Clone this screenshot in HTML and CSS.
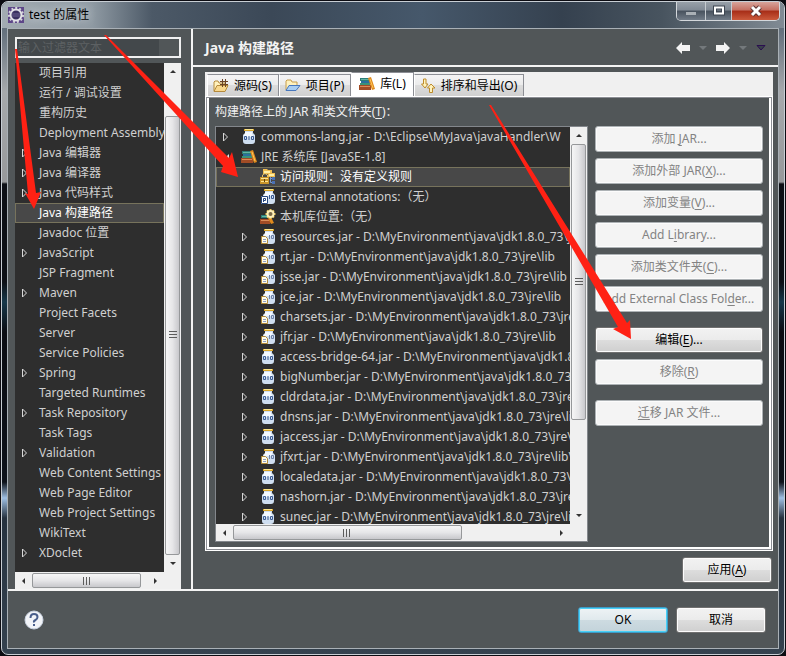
FILE: index.html
```
<!DOCTYPE html>
<html lang="zh-CN">

<head>
  <meta charset="UTF-8">
  <meta name="viewport" content="width=device-width, initial-scale=1.0">
  <title>test 的属性</title>
  <link rel="stylesheet" href="styles.css">
</head>

<body>
  <!-- shared icons -->
  <svg class="sprite" aria-hidden="true">
    <symbol id="closed" viewBox="0 0 8 12">
      <path d="M1.500 2v8l4-4z" fill="none" stroke="#d8d8d8"/>
    </symbol>
    <symbol id="open" viewBox="0 0 8 12">
      <path d="M7 3v6H1z" fill="#e8e8e8"/>
    </symbol>
    <symbol id="jar" viewBox="0 0 16 16">
      <path d="M4 2h8v2l2 2v6q0 3-3 3H5q-3 0-3-3V6l2-2z" fill="#cfdef0"/>
      <path d="M4 3h7v2l1 1v2H3V6l1-1z" fill="#f4f9ff"/>
      <path d="M3 0h10v2H3z" fill="#d9a425"/>
      <path d="M4 0h8v1H4z" fill="#fbe58c"/>
      <path d="M3.500 7.500h2v3h-2zM8 7v4M10.500 7.500h2v3h-2z" fill="none" stroke="#3c5c94"/>
    </symbol>
    <symbol id="jarsrc" viewBox="0 0 16 16">
      <path d="M5 2h8v2l2 2v6q0 3-3 3H6q-3 0-3-3V6l2-2z" fill="#cfdef0"/>
      <path d="M5 3h7v2l1 1v1H4V6l1-1z" fill="#f4f9ff"/>
      <path d="M4 0h10v2H4z" fill="#d9a425"/>
      <path d="M5 0h8v1H5z" fill="#fbe58c"/>
      <path d="M9.500 6v4M11.500 6.500h2v3h-2z" fill="none" stroke="#6f83a8"/>
      <path d="M1.500 7.500h4l2 2v5h-6z" fill="#fffbe8" stroke="#b08a3a"/>
      <path d="M3 10.500h3M3 12.500h3" stroke="#8c9fc4"/>
    </symbol>
    <symbol id="jarext" viewBox="0 0 16 16">
      <path d="M5 2h8v2l2 2v6q0 3-3 3H6q-3 0-3-3V6l2-2z" fill="#cfdef0"/>
      <path d="M5 3h7v2l1 1v1H4V6l1-1z" fill="#f4f9ff"/>
      <path d="M4 0h10v2H4z" fill="#d9a425"/>
      <path d="M5 0h8v1H5z" fill="#fbe58c"/>
      <path d="M9.500 6v4M11.500 6.500h2v3h-2z" fill="none" stroke="#3c5c94"/>
      <path d="M1 7h7v8H1z" fill="#fff"/>
      <path d="M1.500 7.500h6v7h-6z" fill="#fff" stroke="#25457c"/>
      <path d="M3.500 13V9.500h2v2h-2" fill="none" stroke="#25457c"/>
    </symbol>
    <symbol id="books" viewBox="0 0 16 16">
      <path d="M1 2h9v3H1z" fill="#2c7d78"/>
      <path d="M2 3h8v1H2z" fill="#63b5a4"/>
      <path d="M2 5h9v2H2z" fill="#2b6f9d"/>
      <path d="M1 7h10v2H1z" fill="#3b9277"/>
      <path d="M0 9h12v5H0z" fill="#a14c25"/>
      <path d="M1 10h10v1H1z" fill="#d98a58"/>
      <path d="M9 2l3-1 4 12-3 1z" fill="#df8a1d"/>
      <path d="M11 3l3 9" stroke="#ffc55a"/>
    </symbol>
    <symbol id="rules" viewBox="0 0 16 16">
      <path d="M3 0h4l1 1h4v4H3zM8 3h3l1 1h3v4H8z" fill="#f0bd51"/>
      <path d="M4 2h6v2H4zM9 5h5v2H9z" fill="#fff0a8"/>
      <path d="M2.500 8V6q2.500-3 5 0v2" fill="none" stroke="#e4c36a"/>
      <path d="M0 8h9v7H0z" fill="#c9952a"/>
      <path d="M1 9h7v1H1zM1 12h7v1H1z" fill="#ffe591"/>
      <path d="M4.500 10v3" stroke="#60430a"/>
      <path d="M10.500 8v5.500H13M10.500 9.500H13" fill="none" stroke="#7596cf"/>
      <path d="M12 8h3v3h-3zM12 12h3v3h-3z" fill="#4a70b4"/>
    </symbol>
    <symbol id="native" viewBox="0 0 16 16">
      <path d="M1 6h7v3H1z" fill="#2c7d78"/>
      <path d="M2 7h6v1H2z" fill="#63b5a4"/>
      <path d="M0 10h10v5H0z" fill="#a14c25"/>
      <path d="M1 11h8v1H1z" fill="#d98a58"/>
      <path d="M8 9l3-1 3 6-3 1z" fill="#df8a1d"/>
      <path d="M10.500 0v10M5.500 5h10M7 1.500l7 7M14 1.500l-7 7" stroke="#e9c457" stroke-width="2"/>
      <circle cx="10.500" cy="5" r="3" fill="#7a6a48" stroke="#fff0b8" stroke-width="2"/>
    </symbol>
  </svg>

  <div class="window">
    <header class="titlebar">
      <svg class="logo" viewBox="0 0 16 16" aria-hidden="true">
        <path d="M0 0h16v16H0z" fill="#5d4688"/>
        <circle cx="8" cy="8" r="5" fill="#3a3160"/>
        <circle cx="8" cy="8" r="5.500" fill="none" stroke="#e4e4e8" stroke-width="2"/>
        <circle cx="8" cy="8" r="7" fill="none" stroke="#d4d4da" stroke-width="2" stroke-dasharray="2 2"/>
        <path d="M4 7h8M4 9h8" stroke="#6a6290"/>
      </svg>
      <h1>test 的属性</h1>
      <div class="controls">
        <button type="button" class="min" aria-label="最小化">
          <svg width="12" height="12" viewBox="0 0 12 12"><path d="M1 7h10v3H1z" fill="#aab0b6"/></svg>
        </button>
        <button type="button" class="max" aria-label="最大化">
          <svg width="12" height="12" viewBox="0 0 12 12"><path d="M2 2.500h8v6H2z" fill="none" stroke="#3f4752" stroke-width="4"/><path d="M2 2.500h8v6H2z" fill="none" stroke="#fff" stroke-width="2"/></svg>
        </button>
        <button type="button" class="close" aria-label="关闭">
          <svg width="12" height="12" viewBox="0 0 12 12"><path d="M2 2l8 8M10 2l-8 8" stroke="#5b3434" stroke-width="5"/><path d="M2 2l8 8M10 2l-8 8" stroke="#fff" stroke-width="3"/></svg>
        </button>
      </div>
    </header>

    <main class="dialog">
      <div class="panes">
        <aside class="sidebar">
          <div class="filter">
            <input type="text" placeholder="输入过滤器文本" aria-label="输入过滤器文本">
          </div>
          <div class="scroller nav">
            <ul class="view tree">
              <li>项目引用</li>
              <li>运行 / 调试设置</li>
              <li>重构历史</li>
              <li>Deployment Assembly</li>
              <li><svg class="twist"><use href="#closed"/></svg>Java 编辑器</li>
              <li><svg class="twist"><use href="#closed"/></svg>Java 编译器</li>
              <li><svg class="twist"><use href="#closed"/></svg>Java 代码样式</li>
              <li class="selected">Java 构建路径</li>
              <li>Javadoc 位置</li>
              <li><svg class="twist"><use href="#closed"/></svg>JavaScript</li>
              <li>JSP Fragment</li>
              <li><svg class="twist"><use href="#closed"/></svg>Maven</li>
              <li>Project Facets</li>
              <li>Server</li>
              <li>Service Policies</li>
              <li><svg class="twist"><use href="#closed"/></svg>Spring</li>
              <li>Targeted Runtimes</li>
              <li><svg class="twist"><use href="#closed"/></svg>Task Repository</li>
              <li>Task Tags</li>
              <li><svg class="twist"><use href="#closed"/></svg>Validation</li>
              <li>Web Content Settings</li>
              <li>Web Page Editor</li>
              <li>Web Project Settings</li>
              <li>WikiText</li>
              <li><svg class="twist"><use href="#closed"/></svg>XDoclet</li>
            </ul>
            <div class="vbar"><i class="arrow up"></i><div class="before"></div><div class="thumb"></div><div class="after"></div><i class="arrow down"></i></div>
            <div class="hbar"><i class="arrow left"></i><div class="thumb"></div><div class="after"></div><i class="arrow right"></i></div>
          </div>
        </aside>

        <section class="content">
          <div class="heading">
            <h2>Java 构建路径</h2>
            <nav class="history">
              <button type="button" aria-label="后退"><svg width="14" height="12" viewBox="0 0 14 12"><path d="M0 6l6-6v3h8v6H6v3z" fill="#f4f4f4"/></svg></button>
              <button type="button" aria-label="后退列表"><svg width="8" height="4" viewBox="0 0 8 4"><path d="M0 0h8L4 4z" fill="#74797c"/></svg></button>
              <button type="button" aria-label="前进"><svg width="14" height="12" viewBox="0 0 14 12"><path d="M14 6L8 0v3H0v6h8v3z" fill="#f4f4f4"/></svg></button>
              <button type="button" aria-label="前进列表"><svg width="8" height="4" viewBox="0 0 8 4"><path d="M0 0h8L4 4z" fill="#74797c"/></svg></button>
              <button type="button" aria-label="菜单"><svg width="10" height="6" viewBox="0 0 10 6"><path d="M1 .5h8L5 5z" fill="#39404a" stroke="#2b0f50"/></svg></button>
            </nav>
          </div>

          <div class="folder">
            <div class="tabs" role="tablist">
              <button type="button" role="tab">
                <svg width="16" height="16" viewBox="0 0 16 16"><path d="M1 13V4l1-1h3l1 2h6v3" fill="#fff1bd" stroke="#b58a3c"/><path d="M1 13.500l3-6h11l-3 6z" fill="#f8d78c" stroke="#b58a3c"/><path d="M9.500 1v8M12.500 1v8M7 3.500h8M7 6.500h8" stroke="#6b4427"/></svg>
                <span>源码(S)</span>
              </button>
              <button type="button" role="tab">
                <svg width="16" height="16" viewBox="0 0 16 16"><path d="M1 12V3l1-1h4l1 2h5v4" fill="#fff1bd" stroke="#c69d4c"/><path d="M1 12.500l3-5h11l-4 5z" fill="#a8cdf2" stroke="#4777bd"/></svg>
                <span>项目(P)</span>
              </button>
              <button type="button" role="tab" class="active" aria-selected="true">
                <svg width="16" height="16"><use href="#books"/></svg>
                <span>库(L)</span>
              </button>
              <button type="button" role="tab">
                <svg width="16" height="16" viewBox="0 0 16 16"><path d="M3.500 1v5h-2L5 10l3-4H6V1zM9.500 14.500V10h-2L11 6l4 4h-2.500v4.500z" fill="#fff3bd" stroke="#bd8b2b"/></svg>
                <span>排序和导出(O)</span>
              </button>
            </div>

            <div class="page">
              <p class="caption">构建路径上的 JAR 和类文件夹(<u>T</u>)：</p>
              <div class="columns">
                <div class="scroller libs">
                  <ul class="view jars">
                    <li><svg class="twist"><use href="#closed"/></svg><svg class="icon"><use href="#jar"/></svg>commons-lang.jar - D:\Eclipse\MyJava\javaHandler\W</li>
                    <li><svg class="twist"><use href="#open"/></svg><svg class="icon"><use href="#books"/></svg>JRE 系统库 [JavaSE-1.8]</li>
                    <li class="child selected"><svg class="twist"></svg><svg class="icon"><use href="#rules"/></svg>访问规则：没有定义规则</li>
                    <li class="child"><svg class="twist"></svg><svg class="icon"><use href="#jarext"/></svg>External annotations:（无）</li>
                    <li class="child"><svg class="twist"></svg><svg class="icon"><use href="#native"/></svg>本机库位置:（无）</li>
                    <li class="child"><svg class="twist"><use href="#closed"/></svg><svg class="icon"><use href="#jarsrc"/></svg>resources.jar - D:\MyEnvironment\java\jdk1.8.0_73\jre\lib</li>
                    <li class="child"><svg class="twist"><use href="#closed"/></svg><svg class="icon"><use href="#jarsrc"/></svg>rt.jar - D:\MyEnvironment\java\jdk1.8.0_73\jre\lib</li>
                    <li class="child"><svg class="twist"><use href="#closed"/></svg><svg class="icon"><use href="#jarsrc"/></svg>jsse.jar - D:\MyEnvironment\java\jdk1.8.0_73\jre\lib</li>
                    <li class="child"><svg class="twist"><use href="#closed"/></svg><svg class="icon"><use href="#jarsrc"/></svg>jce.jar - D:\MyEnvironment\java\jdk1.8.0_73\jre\lib</li>
                    <li class="child"><svg class="twist"><use href="#closed"/></svg><svg class="icon"><use href="#jarsrc"/></svg>charsets.jar - D:\MyEnvironment\java\jdk1.8.0_73\jre\lib</li>
                    <li class="child"><svg class="twist"><use href="#closed"/></svg><svg class="icon"><use href="#jarsrc"/></svg>jfr.jar - D:\MyEnvironment\java\jdk1.8.0_73\jre\lib</li>
                    <li class="child"><svg class="twist"><use href="#closed"/></svg><svg class="icon"><use href="#jar"/></svg>access-bridge-64.jar - D:\MyEnvironment\java\jdk1.8.0_73\jre\lib\ext</li>
                    <li class="child"><svg class="twist"><use href="#closed"/></svg><svg class="icon"><use href="#jar"/></svg>bigNumber.jar - D:\MyEnvironment\java\jdk1.8.0_73\jre\lib\ext</li>
                    <li class="child"><svg class="twist"><use href="#closed"/></svg><svg class="icon"><use href="#jar"/></svg>cldrdata.jar - D:\MyEnvironment\java\jdk1.8.0_73\jre\lib\ext</li>
                    <li class="child"><svg class="twist"><use href="#closed"/></svg><svg class="icon"><use href="#jar"/></svg>dnsns.jar - D:\MyEnvironment\java\jdk1.8.0_73\jre\lib\ext</li>
                    <li class="child"><svg class="twist"><use href="#closed"/></svg><svg class="icon"><use href="#jar"/></svg>jaccess.jar - D:\MyEnvironment\java\jdk1.8.0_73\jre\lib\ext</li>
                    <li class="child"><svg class="twist"><use href="#closed"/></svg><svg class="icon"><use href="#jarsrc"/></svg>jfxrt.jar - D:\MyEnvironment\java\jdk1.8.0_73\jre\lib\ext</li>
                    <li class="child"><svg class="twist"><use href="#closed"/></svg><svg class="icon"><use href="#jar"/></svg>localedata.jar - D:\MyEnvironment\java\jdk1.8.0_73\jre\lib\ext</li>
                    <li class="child"><svg class="twist"><use href="#closed"/></svg><svg class="icon"><use href="#jar"/></svg>nashorn.jar - D:\MyEnvironment\java\jdk1.8.0_73\jre\lib\ext</li>
                    <li class="child"><svg class="twist"><use href="#closed"/></svg><svg class="icon"><use href="#jar"/></svg>sunec.jar - D:\MyEnvironment\java\jdk1.8.0_73\jre\lib\ext</li>
                  </ul>
                  <div class="vbar"><i class="arrow up"></i><div class="thumb"></div><div class="after"></div><i class="arrow down"></i></div>
                  <div class="hbar"><i class="arrow left"></i><div class="thumb"></div><div class="after"></div><i class="arrow right"></i></div>
                </div>

                <div class="actions">
                  <button type="button" class="btn" disabled>添加 <u>J</u>AR...</button>
                  <button type="button" class="btn" disabled>添加外部 JAR(<u>X</u>)...</button>
                  <button type="button" class="btn" disabled>添加变量(<u>V</u>)...</button>
                  <button type="button" class="btn" disabled>Add L<u>i</u>brary...</button>
                  <button type="button" class="btn" disabled>添加类文件夹(<u>C</u>)...</button>
                  <button type="button" class="btn" disabled>Add External Class Fol<u>d</u>er...</button>
                  <button type="button" class="btn group">编辑(<u>E</u>)...</button>
                  <button type="button" class="btn" disabled>移除(<u>R</u>)</button>
                  <button type="button" class="btn group" disabled><u>迁</u>移 JAR 文件...</button>
                </div>
              </div>
            </div>
          </div>

          <div class="apply">
            <button type="button" class="btn">应用(<u>A</u>)</button>
          </div>
        </section>
      </div>

      <footer class="footer">
        <button type="button" class="help" aria-label="帮助">
          <svg width="20" height="20" viewBox="0 0 20 20"><circle cx="10" cy="10" r="9" fill="#f2f4f8" stroke="#c9d2e0"/><path d="M6.500 8q0-4 3.500-4t3.500 3q0 2-2 3t-1.500 2.500" fill="none" stroke="#4a5f8c" stroke-width="2"/><path d="M9 14h2v2H9z" fill="#4a5f8c"/></svg>
        </button>
        <button type="button" class="btn default">OK</button>
        <button type="button" class="btn">取消</button>
      </footer>
    </main>
  </div>

  <!-- red pointers drawn over the dialog -->
  <svg class="pointers" width="786" height="656" viewBox="0 0 786 656" aria-hidden="true">
    <path d="M15 49h2L36 193l5-1-7 17-9-16 3 1z"/>
    <path d="M104 35h2L229 158l3-6 6 25-17-5 2-6z"/>
    <path d="M489 105h2L627 323l3-3 1 19-18-10 5-2z"/>
  </svg>
</body>

</html>
```

FILE: styles.css
```
* {
  box-sizing: border-box;
}
body {
  margin: 0;
  padding: 1px;
  min-height: 100vh;
  display: flex;
  background: #0c0c12;
  font: 12px/20px "Noto Sans", "Noto Sans CJK SC", sans-serif;
  text-spacing-trim: space-all;
  color: #d0d0d0;
}
h1, h2, p, ul {
  margin: 0;
  padding: 0;
}
ul {
  list-style: none;
}
button {
  font: inherit;
  padding: 0;
}
svg {
  display: block;
}
u {
  text-underline-offset: 2px;
}
.sprite {
  position: absolute;
  width: 0;
  height: 0;
}

/* window frame */
.window {
  flex: 1;
  min-width: 0;
  display: flex;
  flex-direction: column;
  padding: 0 5px 5px;
  border: 1px solid #c8ced4;
  border-radius: 7px;
  background: linear-gradient(#5b6874 0, #66727e 30px, #a6a9ac 90px, #97999b 180px, #0d1016 182px, #0d1016 280px, #17384a 300px, #0b0d13 330px, #0d121a 480px, #9fc0e4 496px, #26323f 516px, #35424f 100%);
}
.titlebar {
  display: flex;
  align-items: center;
  height: 26px;
  margin: 0 -5px;
  padding: 0 4px 0 6px;
  border-radius: 6px 6px 0 0;
  background: linear-gradient(90deg, #a2abb2 0, #8f9aa3 90px, #4c5967 150px, #3b4857 270px, #46586b 420px, #35414f 560px, #48545f 660px, #818b94 100%);
}
.logo {
  width: 16px;
  height: 16px;
}
.titlebar h1 {
  flex: 1;
  margin-left: 5px;
  font-size: 12px;
  font-weight: 400;
  color: #000;
  text-shadow: 0 0 8px #e8ecf0;
}
.controls {
  display: flex;
  align-self: flex-start;
  height: 19px;
  border: 1px solid #d4d8dc;
  border-top: 0;
  border-radius: 0 0 5px 5px;
  overflow: hidden;
}
.controls button {
  display: grid;
  place-items: center;
  width: 29px;
  border: 0;
  border-right: 1px solid #c6cbd0;
  background: linear-gradient(#98a0a9 0, #808994 45%, #48525e 50%, #717b87 100%);
}
.controls .max {
  width: 26px;
}
.controls .close {
  width: 47px;
  border-right: 0;
  background: linear-gradient(#d7a49b 0, #c56f61 45%, #a72d17 50%, #cb5a3c 100%);
}

.dialog {
  flex: 1;
  display: flex;
  flex-direction: column;
  border: 1px solid #a9b0b6;
  background: #515658;
}
.panes {
  flex: 1;
  display: flex;
  border-bottom: 2px solid #f4f4f4;
}

/* category tree */
.sidebar {
  display: flex;
  flex-direction: column;
  flex: 0 0 185px;
  padding: 8px 10px 0 7px;
  border-right: 2px solid #f4f4f4;
}
.filter {
  height: 21px;
  margin-bottom: 5px;
  border: 2px solid #f0f0f0;
}
.filter input {
  display: block;
  width: 142px;
  height: 17px;
  padding: 0 1px;
  border: 0;
  background: #43484b;
  font: inherit;
  color: #d6d6d6;
}
.filter input::placeholder {
  color: #5d6163;
}

.scroller {
  flex: 1;
  min-width: 0;
  display: grid;
  grid-template-columns: minmax(0, 1fr) 17px;
  grid-template-rows: 1fr 17px;
  background: #f0f0f0;
}
.view {
  overflow: hidden;
  background: #2e2e2e;
}
.view li {
  position: relative;
  display: flex;
  align-items: center;
  height: 20px;
  white-space: nowrap;
  border: 1px solid transparent;
}
.view .selected {
  border-color: #77735c;
  background: #484848;
  color: #fff;
}
.twist {
  width: 8px;
  height: 12px;
}
.tree li {
  padding-left: 23px;
}
.tree .twist {
  position: absolute;
  left: 5px;
}

/* scroll bars */
.vbar, .hbar {
  display: flex;
  background: #f0f0f0;
}
.vbar {
  flex-direction: column;
}
.thumb {
  display: grid;
  place-items: center;
  border: 1px solid #96989a;
  border-radius: 2px;
}
.vbar .thumb {
  margin: 0 1px;
  background: linear-gradient(90deg, #f6f6f6, #e6e6e8 50%, #c8c8cc);
}
.hbar .thumb {
  margin: 1px 0;
  background: linear-gradient(#f6f6f6, #e6e6e8 50%, #c8c8cc);
}
.thumb::after {
  content: "";
  width: 8px;
  height: 8px;
  background: repeating-linear-gradient(#5c5c5c 0 1px, transparent 1px 3px);
}
.hbar .thumb::after {
  background: repeating-linear-gradient(90deg, #5c5c5c 0 1px, transparent 1px 3px);
}
.arrow {
  display: grid;
  place-items: center;
  width: 17px;
  height: 17px;
}
.arrow::after {
  content: "";
  border: 3px solid transparent;
}
.up::after {
  border-top: 0;
  border-bottom-color: #333;
}
.down::after {
  border-bottom: 0;
  border-top-color: #333;
}
.left::after {
  border-left: 0;
  border-right-color: #333;
}
.right::after {
  border-right: 0;
  border-left-color: #333;
}
.nav .vbar .before {
  flex: 36;
}
.nav .vbar .thumb {
  flex: 438;
}
.nav .hbar .thumb {
  flex: 108;
}
.nav .hbar .after {
  flex: 6;
}
.libs .vbar .thumb {
  flex: 276;
}
.libs .vbar .after {
  flex: 88;
}
.libs .hbar .thumb {
  flex: 228;
}
.libs .hbar .after {
  flex: 92;
}

/* right side */
.content {
  flex: 1;
  min-width: 0;
  display: flex;
  flex-direction: column;
}
.heading {
  display: flex;
  align-items: center;
  justify-content: space-between;
  height: 38px;
  padding: 2px 12px 0;
  border-bottom: 2px solid #f4f4f4;
}
.heading h2 {
  font-size: 14px;
  font-weight: 700;
  color: #f4f4f4;
}
.history {
  display: flex;
  align-items: center;
  gap: 9px;
}
.history button {
  border: 0;
  background: none;
}
.folder {
  flex: 1;
  display: flex;
  flex-direction: column;
  margin: 5px 5px 6px 12px;
  background: #f0f0f0;
}
.tabs {
  display: flex;
  align-items: flex-end;
  height: 24px;
  padding-left: 2px;
}
.tabs button {
  display: flex;
  align-items: center;
  gap: 5px;
  height: 22px;
  padding: 0 6px 0 5px;
  border: 1px solid #8c8e94;
  border-bottom: 0;
  border-left-color: #fff;
  background: linear-gradient(#f4f4f4, #ebebeb 50%, #dcdcdc 50%, #d0d0d0);
  color: #000;
}
.tabs .active {
  height: 24px;
  padding: 0 7px 2px;
  background: #fff;
}
.page {
  flex: 1;
  display: flex;
  flex-direction: column;
  padding: 4px 6px 5px;
  border: solid #fff;
  border-width: 2px 4px 4px;
  outline: 1px solid #8c8e94;
  outline-offset: -2px;
  background: #515658;
}
.caption {
  height: 24px;
  color: #f0f0f0;
}
.columns {
  flex: 1;
  display: flex;
  gap: 7px;
}
.libs {
  border: 1px solid #83878c;
}
/* the list takes the height that is left and clips its rows */
.jars {
  contain: size;
}
.jars li {
  padding-left: 5px;
}
.jars .child {
  padding-left: 24px;
}
.jars .twist {
  flex: none;
  margin-right: 11px;
}
.icon {
  flex: none;
  width: 16px;
  height: 16px;
  margin-right: 4px;
}
.actions {
  display: flex;
  flex-direction: column;
  flex: 0 0 168px;
  gap: 6px;
}
.btn {
  width: 90px;
  height: 26px;
  border: 1px solid #707070;
  border-radius: 3px;
  box-shadow: inset 0 0 0 1px #fcfcfc;
  background: linear-gradient(#f2f2f2, #ebebeb 50%, #dddddd 50%, #cfcfcf);
  color: #000;
  white-space: nowrap;
}
.btn:disabled {
  border-color: #adb2b5;
  background: #f4f4f4;
  color: #838383;
}
.btn.default {
  border-color: #3c9cc8;
  box-shadow: inset 0 0 0 1px #48d1f7;
  background: linear-gradient(#eef3f5, #e0e9ed 50%, #cddbe1 50%, #c3d3da);
}
.actions .btn {
  width: 100%;
}
.actions .group {
  margin-top: 9px;
}
.apply {
  display: flex;
  justify-content: flex-end;
  padding: 0 6px 6px;
}
.footer {
  display: flex;
  align-items: center;
  gap: 8px;
  height: 57px;
  padding: 0 12px 0 16px;
}
.help {
  margin-right: auto;
  border: 0;
  background: none;
}

.pointers {
  position: absolute;
  top: 0;
  left: 0;
  fill: #ff2114;
  pointer-events: none;
}
```
